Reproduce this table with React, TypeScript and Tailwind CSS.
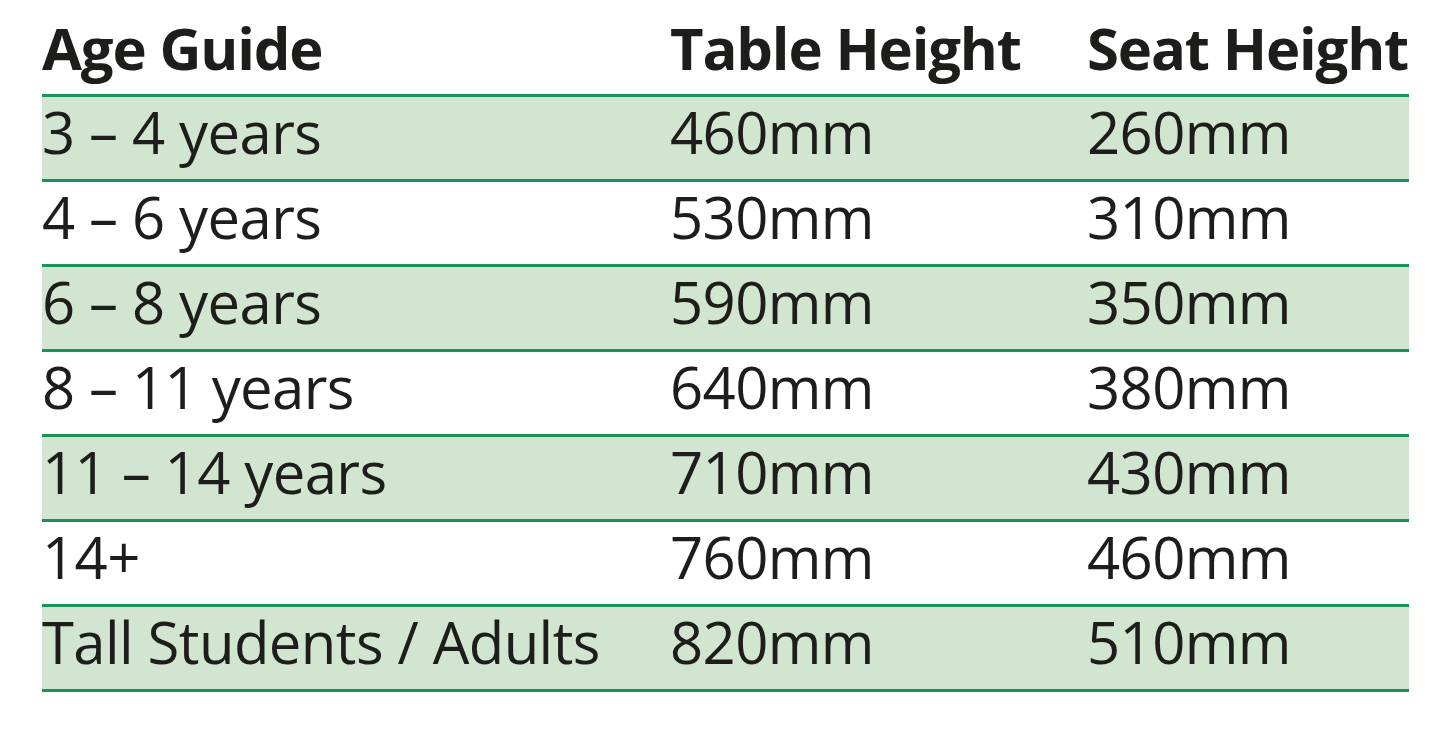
import React from 'react';

// Age guide sizing table: table and seat heights by age group

const rows = [
  { age: '3 – 4 years', table: '460mm', seat: '260mm' },
  { age: '4 – 6 years', table: '530mm', seat: '310mm' },
  { age: '6 – 8 years', table: '590mm', seat: '350mm' },
  { age: '8 – 11 years', table: '640mm', seat: '380mm' },
  { age: '11 – 14 years', table: '710mm', seat: '430mm' },
  { age: '14+', table: '760mm', seat: '460mm' },
  { age: 'Tall Students / Adults', table: '820mm', seat: '510mm' },
];

const App: React.FC = () => {
  return (
    <div className="w-[1444px] h-[732px] bg-white text-[#1d1d1b] font-['Open_Sans',sans-serif] overflow-hidden">
      <div className="ml-[42px] w-[1367px]">
        {/* Header */}
        <div className="flex h-[94px] items-end pb-[17px] text-[58px] font-bold leading-none tracking-[-0.02em]">
          <div className="w-[628px]">Age Guide</div>
          <div className="w-[417px]">Table Height</div>
          <div>Seat Height</div>
        </div>

        {/* Body rows */}
        <div className="border-b-[3px] border-[#1a9155]">
          {rows.map((row, i) => (
            <div
              key={row.age}
              className={`flex h-[85px] items-center pb-[12px] border-t-[3px] border-[#1a9155] text-[58px] leading-none tracking-[-0.01em] ${
                i % 2 === 0 ? 'bg-[#d2e5d0]' : 'bg-white'
              }`}
            >
              <div className="w-[628px]">{row.age}</div>
              <div className="w-[417px]">{row.table}</div>
              <div>{row.seat}</div>
            </div>
          ))}
        </div>
      </div>
    </div>
  );
};

export default App;
